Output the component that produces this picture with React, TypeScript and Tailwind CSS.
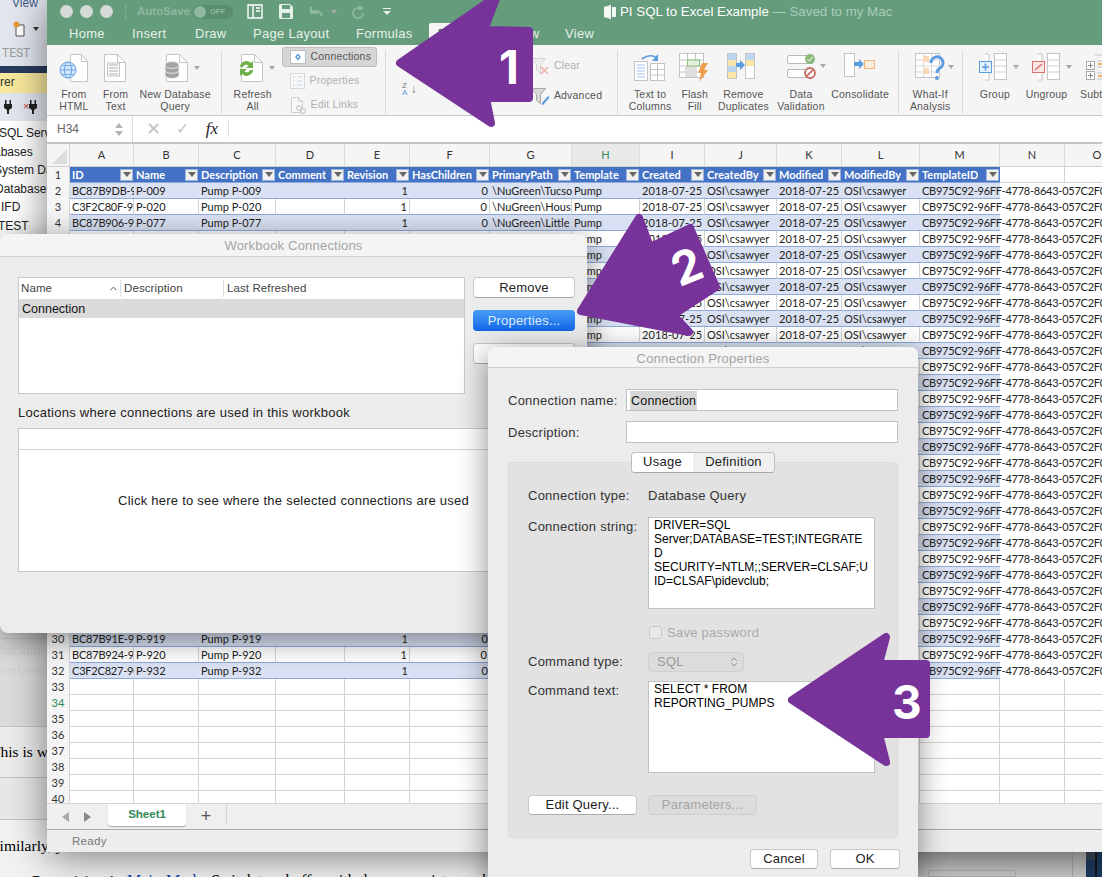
import { ChevronsUpDown, ChevronUp } from "lucide-react";
import type { ReactNode } from "react";

const gridCols =
  "grid grid-cols-[23px_64px_65px_77px_69px_65px_80px_82px_68px_65px_72px_65px_78px_80px_65px_65px]";

const columns = ["A", "B", "C", "D", "E", "F", "G", "H", "I", "J", "K", "L", "M", "N", "O"];
const headers = ["ID", "Name", "Description", "Comment", "Revision", "HasChildren", "PrimaryPath", "Template", "Created", "CreatedBy", "Modified", "ModifiedBy", "TemplateID"];

const pumps: Record<number, [string, string, string]> = {
  2: ["BC87B9DB-90F1-4A11", "P-009", "\\NuGreen\\Tucson"],
  3: ["C3F2C80F-90F1-4A11", "P-020", "\\NuGreen\\Houston"],
  4: ["BC87B906-90F1-4A11", "P-077", "\\NuGreen\\Little Rock"],
  30: ["BC87B91E-90F1-4A11", "P-919", "\\NuGreen\\Tucson"],
  31: ["BC87B924-90F1-4A11", "P-920", "\\NuGreen\\Tucson"],
  32: ["C3F2C827-90F1-4A11", "P-932", "\\NuGreen\\Houston"],
};

const dataRows = Array.from({ length: 31 }, (_, i) => i + 2);
const emptyRows = [33, 34, 35, 36, 37, 38, 39, 40];

const RowNumber = ({ n }: { n: number }) => (
  <div className={`bg-[#f5f5f5] text-center border-r border-[#d4d4d4] ${n === 34 ? "text-[#2f8a57]" : "text-[#333]"}`}>{n}</div>
);

const DataRow = ({ n }: { n: number }) => {
  const [id, name, path] = pumps[n] ?? ["BC87B906-90F1-4A11", "P-1" + n, "\\NuGreen\\Tucson"];
  const shaded = n % 2 === 0;
  const cell = `overflow-hidden whitespace-nowrap px-[2px] border-b border-[#8ea9db] ${shaded ? "bg-[#d9e1f2]" : "bg-white border-r border-r-[#d4d4d4]"}`;
  return (
    <div className={`${gridCols} h-[16px] leading-[15px]`}>
      <RowNumber n={n} />
      <div className={`${cell} tracking-[-0.2px]`}>{id}</div>
      <div className={cell}>{name}</div>
      <div className={cell}>Pump {name}</div>
      <div className={cell} />
      <div className={`${cell} text-right`}>1</div>
      <div className={`${cell} text-right`}>0</div>
      <div className={cell}>{path}</div>
      <div className={cell}>Pump</div>
      <div className={`${cell} tracking-[0.1px] [word-spacing:-1px]`}>2018-07-25 12:40:11</div>
      <div className={cell}>OSI\csawyer</div>
      <div className={`${cell} tracking-[0.1px] [word-spacing:-1px]`}>2018-07-25 12:40:11</div>
      <div className={cell}>OSI\csawyer</div>
      <div className={`whitespace-nowrap px-[2px] tracking-[-0.25px] border-b border-[#8ea9db] relative ${shaded ? "bg-[#d9e1f2]" : "bg-white"}`}>CB975C92-96FF-4778-8643-057C2F0A11B2</div>
      <div />
      <div />
    </div>
  );
};

const EmptyRow = ({ n }: { n: number }) => (
  <div className={`${gridCols} h-[16px] leading-[15px]`}>
    <RowNumber n={n} />
    {columns.map((c) => (
      <div key={c} className="border-r border-b border-[#d4d4d4]" />
    ))}
  </div>
);

const Sheet = () => (
  <div className="flex-1 overflow-hidden bg-white font-[Lato,sans-serif] text-[11px] text-[#222]">
    <div className={`${gridCols} h-[23px] bg-[#f5f5f5] text-[#333] leading-[22px] border-b border-[#d0d0d0]`}>
      <div className="border-r border-[#d4d4d4] flex items-end justify-end pr-[2px] pb-[2px]">
        <svg width="15" height="15" viewBox="0 0 15 15"><path d="M15 0v15H0z" fill="#dcdcdc" /></svg>
      </div>
      {columns.map((c) => (
        <div key={c} className={`text-center border-r border-[#dcdcdc] ${c === "H" ? "bg-[#e9e9e9] text-[#2f8a57]" : ""}`}>{c}</div>
      ))}
    </div>
    <div className={`${gridCols} h-[16px] leading-[15px]`}>
      <RowNumber n={1} />
      {headers.map((h) => (
        <div key={h} className="bg-[#4472c4] border-b border-[#8ea9db] text-white font-bold pl-[2px] pr-[1px] flex items-center justify-between overflow-hidden whitespace-nowrap">
          <span className="overflow-hidden">{h}</span>
          <span className="shrink-0 w-[13px] h-[12px] bg-[#f0f0f0] border border-[#9db3d9] flex items-center justify-center">
            <span className="w-0 h-0 border-x-[4px] border-x-transparent border-t-[5px] border-t-[#666]" />
          </span>
        </div>
      ))}
      <div className="border-r border-b border-[#d4d4d4]" />
      <div className="border-r border-b border-[#d4d4d4]" />
    </div>
    {dataRows.map((n) => (
      <DataRow key={n} n={n} />
    ))}
    {emptyRows.map((n) => (
      <EmptyRow key={n} n={n} />
    ))}
  </div>
);

/* ribbon drawings */
const Doc = ({ children }: { children?: ReactNode }) => (
  <svg width="30" height="30" viewBox="0 0 30 30" fill="none">
    <path d="M3.5 1.5h13l8 8v19h-21z" fill="#fff" stroke="#c4c4c4" />
    <path d="M16.5 1.5v8h8" stroke="#c4c4c4" />
    {children}
  </svg>
);

const GlobeIcon = () => (
  <svg width="30" height="30" viewBox="0 0 30 30" fill="none">
    <path d="M11.5 1.5h11l6 7v20h-17z" fill="#fff" stroke="#c4c4c4" />
    <path d="M22.5 1.5v7h6" stroke="#c4c4c4" />
    <circle cx="9" cy="17" r="8" fill="#d3e6f9" stroke="#6fa9e6" />
    <ellipse cx="9" cy="17" rx="3.6" ry="8" stroke="#6fa9e6" />
    <path d="M1 17h16M2.5 12.5h13M2.5 21.5h13" stroke="#6fa9e6" />
  </svg>
);

const TextDocIcon = () => (
  <Doc>
    <path d="M8 12h9M8 15h9M8 18h9M8 21h9" stroke="#aaa" />
    <rect x="6.5" y="10" width="12" height="13" stroke="#c4c4c4" />
  </Doc>
);

const DatabaseIcon = () => (
  <Doc>
    <g fill="#a2a2a2" stroke="#f4f4f4" strokeWidth="0.8">
      <ellipse cx="9" cy="22" rx="7" ry="3.4" />
      <path d="M2 22v-5h14v5" />
      <ellipse cx="9" cy="17" rx="7" ry="3.4" />
      <path d="M2 17v-5h14v5" />
      <ellipse cx="9" cy="12" rx="7" ry="3.4" />
    </g>
  </Doc>
);

const RefreshIcon = () => (
  <Doc>
    <path d="M2 14a6.5 6.5 0 0 1 11-4l2-2v7H8l2.5-2.5A3.5 3.5 0 0 0 5 14z" fill="#6fb04a" />
    <path d="M15 17a6.5 6.5 0 0 1-11 4l-2 2v-7h7l-2.5 2.5A3.5 3.5 0 0 0 12 17z" fill="#6fb04a" />
  </Doc>
);

const ConnectionsIcon = () => (
  <svg width="16" height="14" viewBox="0 0 16 14" fill="none">
    <rect x="0.5" y="0.5" width="15" height="13" fill="#fff" stroke="#bdbdbd" />
    <path d="M8 3.5 11 7 8 10.5 5 7z" fill="#5b9be0" />
    <circle cx="8" cy="7" r="1" fill="#fff" />
  </svg>
);

const PropertiesIcon = () => (
  <svg width="15" height="16" viewBox="0 0 15 16" fill="none" stroke="#d8d8d8">
    <rect x="0.5" y="0.5" width="14" height="15" fill="#f8f8f8" />
    <path d="M3 4h2M7 4h5M3 8h2M7 8h5M3 12h2M7 12h5" stroke="#c6d8ea" />
  </svg>
);

const LinksIcon = () => (
  <svg width="17" height="17" viewBox="0 0 17 17" fill="none" stroke="#d0d0d0">
    <path d="M1.5.5h7l4 4v11h-11z" fill="#f8f8f8" />
    <path d="M8.5.5v4h4" />
    <circle cx="9" cy="11" r="2.4" fill="#f5f5f5" stroke="#bbb" />
    <circle cx="13" cy="14" r="2.4" fill="#f5f5f5" stroke="#bbb" />
  </svg>
);

const Funnel = ({ mark }: { mark: "clear" | "edit" }) => (
  <svg width="19" height="19" viewBox="0 0 19 19" fill="none">
    <path d="M.5 1.5h14l-5 6v9l-4-3v-6z" fill={mark === "clear" ? "#eeeeee" : "#d9d9d9"} stroke={mark === "clear" ? "#d4d4d4" : "#a8a8a8"} />
    {mark === "clear" ? (
      <path d="M10 10l7 7M17 10l-7 7" stroke="#eeb3ae" strokeWidth="1.6" />
    ) : (
      <path d="M11 16l6-7 1.5 1.5-6 7-2 .5z" fill="#5b9be0" />
    )}
  </svg>
);

const SplitIcon = () => (
  <svg width="34" height="30" viewBox="0 0 34 30" fill="none">
    <path d="M9 6q8-6 15-1" stroke="#5b9be0" strokeWidth="1.6" />
    <path d="M25 1v7h-6z" fill="#5b9be0" />
    <rect x="1.5" y="8.5" width="13" height="19" fill="#fff" stroke="#c4c4c4" />
    <path d="M4 12h8M4 15h8M4 18h8M4 21h8M4 24h8" stroke="#9cc3ec" />
    <rect x="17.5" y="10.5" width="14" height="17" fill="#fff" stroke="#c4c4c4" />
    <path d="M17.5 16.5h14M17.5 22h14M24.5 10.5v17" stroke="#c4c4c4" />
  </svg>
);

const FlashIcon = () => (
  <svg width="32" height="30" viewBox="0 0 32 30" fill="none">
    <rect x="0.5" y="0.5" width="24" height="24" fill="#fff" stroke="#c4c4c4" />
    <path d="M.5 7h24M.5 13h24M.5 19h24M8.5.5v24M16.5.5v24" stroke="#c4c4c4" />
    <rect x="8.5" y="7" width="12" height="6" fill="#e4f1de" stroke="#8cbf7a" />
    <rect x="6" y="14" width="12" height="10" fill="#dedede" />
    <path d="M23 10h6l-4 7h4l-9 12 2-9h-3z" fill="#ef9f4a" />
  </svg>
);

const DuplicatesIcon = () => (
  <svg width="32" height="28" viewBox="0 0 32 28" fill="none">
    <rect x="0.5" y="0.5" width="9" height="25" fill="#fff" stroke="#c4c4c4" />
    <rect x="1" y="1" width="8" height="6" fill="#bcd6f2" />
    <rect x="1" y="13" width="8" height="6" fill="#bcd6f2" />
    <rect x="1" y="19" width="8" height="6" fill="#fbe6a7" />
    <rect x="1" y="7" width="8" height="6" fill="#fbe6a7" />
    <rect x="18.5" y="0.5" width="9" height="25" fill="#fff" stroke="#c4c4c4" />
    <rect x="19" y="1" width="8" height="6" fill="#bcd6f2" />
    <rect x="19" y="7" width="8" height="6" fill="#fbe6a7" />
    <path d="M9 10h4V7l5 5-5 5v-3H9z" fill="#5b9be0" />
  </svg>
);

const ValidationIcon = () => (
  <svg width="30" height="26" viewBox="0 0 30 26" fill="none">
    <rect x="0.5" y="2.5" width="26" height="8" rx="1.5" fill="#fff" stroke="#b8b8b8" />
    <rect x="0.5" y="16.5" width="26" height="8" rx="1.5" fill="#fff" stroke="#b8b8b8" />
    <circle cx="23" cy="6" r="5" fill="#8dbb7c" />
    <path d="M20.5 6l2 2 3-4" stroke="#fff" />
    <circle cx="23" cy="20" r="5" fill="#fff" stroke="#c96a64" strokeWidth="1.8" />
    <path d="M19.6 23.2l6.8-6.5" stroke="#c96a64" strokeWidth="1.8" />
  </svg>
);

const ConsolidateIcon = () => (
  <svg width="32" height="24" viewBox="0 0 32 24" fill="none">
    <rect x="0.5" y="0.5" width="10" height="23" fill="#fff" stroke="#c4c4c4" />
    <path d="M10 9h5V6l5 5-5 5v-3h-5z" fill="#5b9be0" />
    <rect x="20.5" y="7.5" width="10" height="8" fill="#fdeedc" stroke="#efb77c" />
  </svg>
);

const WhatIfIcon = () => (
  <svg width="32" height="28" viewBox="0 0 32 28" fill="none">
    <rect x="0.5" y="0.5" width="24" height="24" fill="#fff" stroke="#c4c4c4" />
    <path d="M.5 7h24M.5 13h24M.5 19h24M8.5.5v24M16.5.5v24" stroke="#d6d6d6" />
    <rect x="8" y="3" width="6" height="6" fill="#f8d7bb" />
    <rect x="8" y="15" width="6" height="6" fill="#f8d7bb" />
    <path d="M16 10a6 6 0 1 1 9 5c-2 1-3 2-3 5" stroke="#5b9be0" strokeWidth="3" />
    <circle cx="22" cy="25" r="2" fill="#5b9be0" />
  </svg>
);

const GroupIcon = ({ kind }: { kind: "group" | "ungroup" }) => (
  <svg width="28" height="28" viewBox="0 0 28 28" fill="none">
    <rect x="15.5" y="0.5" width="12" height="26" fill="#fff" stroke="#c4c4c4" />
    <path d="M15.5 7h12M15.5 13h12M15.5 19h12" stroke="#d0d0d0" />
    <path d="M6 1h4v26H6" stroke="#c4c4c4" fill="#fff" />
    <rect x="0.5" y="8.5" width="12" height="11" fill={kind === "group" ? "#e7f1fb" : "#fce8e6"} stroke={kind === "group" ? "#5b9be0" : "#d8716a"} />
    {kind === "group" ? <path d="M3 14h7M6.5 10.5v7" stroke="#5b9be0" strokeWidth="1.6" /> : <path d="M3 17l7-6" stroke="#d8716a" strokeWidth="1.6" />}
  </svg>
);

const SubtotalIcon = () => (
  <svg width="28" height="28" viewBox="0 0 28 28" fill="none">
    <rect x="0.5" y="8.5" width="8" height="8" fill="#fff" stroke="#aaa" />
    <rect x="0.5" y="18.5" width="8" height="8" fill="#fff" stroke="#aaa" />
    <path d="M2 12.5h5M4.5 10v5M2 22.5h5M4.5 20v5" stroke="#888" />
    <path d="M9 2h19M11 8h17M11 14h17M11 20h17M11 26h17" stroke="#c4c4c4" />
    <path d="M12 11h16M12 23h16" stroke="#f2b366" strokeWidth="2" />
  </svg>
);

const Caret = ({ className = "" }: { className?: string }) => (
  <span className={`inline-block w-0 h-0 border-x-[3px] border-x-transparent border-t-[4px] border-t-[#a8a8a8] ${className}`} />
);

const RibbonItem = ({ w, icon, lines }: { w: string; icon: ReactNode; lines: string[] }) => (
  <div className={`${w} flex flex-col items-center`}>
    <div className="h-[35px] flex items-start justify-center">{icon}</div>
    {lines.map((l) => (
      <div key={l} className="leading-[12px] whitespace-nowrap">{l}</div>
    ))}
  </div>
);

const RibbonSep = ({ className }: { className: string }) => <div className={`w-px h-[64px] -mt-[3px] bg-[#dcdcdc] shrink-0 ${className}`} />;

const Ribbon = () => (
  <div className="h-[71px] bg-[#f5f5f5] border-b border-[#c8c8c8] pt-[8px] flex items-start text-[10.5px] tracking-[0.2px] text-[#555]">
    <RibbonItem w="w-[42px] ml-[6px]" icon={<GlobeIcon />} lines={["From", "HTML"]} />
    <RibbonItem w="w-[42px]" icon={<TextDocIcon />} lines={["From", "Text"]} />
    <RibbonItem
      w="w-[78px]"
      icon={
        <div className="flex items-center gap-[1px] pl-[12px]">
          <DatabaseIcon />
          <Caret />
        </div>
      }
      lines={["New Database", "Query"]}
    />
    <RibbonSep className="ml-[7px]" />
    <RibbonItem
      w="w-[50px] ml-[6px]"
      icon={
        <div className="flex items-center gap-[1px] pl-[8px]">
          <RefreshIcon />
          <Caret />
        </div>
      }
      lines={["Refresh", "All"]}
    />
    <div className="w-[96px] ml-[4px] -mt-[6px] flex flex-col text-[#b0b0b0]">
      <div className="h-[20px] flex items-center gap-[5px] pl-[7px] bg-[#d6d6d6] border border-[#bdbdbd] rounded-[3px] text-[#555]">
        <ConnectionsIcon />
        <span>Connections</span>
      </div>
      <div className="h-[24px] mt-[2px] flex items-center gap-[5px] pl-[8px]">
        <PropertiesIcon />
        <span>Properties</span>
      </div>
      <div className="h-[24px] flex items-center gap-[4px] pl-[8px]">
        <LinksIcon />
        <span>Edit Links</span>
      </div>
    </div>
    <RibbonSep className="ml-[8px]" />
    <div className="w-[233px] flex">
      <div className="w-[145px] pl-[16px] pt-[30px] flex items-center gap-[3px] text-[#999] h-[42px]">
        <div className="flex flex-col text-[8px] leading-[7px] items-center">
          <span className="text-[#777]">Z</span>
          <span className="text-[#5b9be0]">A</span>
        </div>
        <span className="text-[12px] font-bold text-[#777]">↓</span>
      </div>
      <div className="flex flex-col -mt-[2px]">
        <div className="h-[30px] flex items-center gap-[4px] text-[#b0b0b0]">
          <Funnel mark="clear" />
          <span>Clear</span>
        </div>
        <div className="h-[30px] flex items-center gap-[4px]">
          <Funnel mark="edit" />
          <span>Advanced</span>
        </div>
      </div>
    </div>
    <RibbonSep className="" />
    <RibbonItem w="w-[50px] ml-[7px]" icon={<SplitIcon />} lines={["Text to", "Columns"]} />
    <RibbonItem w="w-[40px]" icon={<FlashIcon />} lines={["Flash", "Fill"]} />
    <RibbonItem w="w-[58px]" icon={<DuplicatesIcon />} lines={["Remove", "Duplicates"]} />
    <RibbonItem
      w="w-[58px]"
      icon={
        <div className="flex items-center gap-[3px] pl-[10px]">
          <ValidationIcon />
          <Caret />
        </div>
      }
      lines={["Data", "Validation"]}
    />
    <RibbonItem w="w-[61px]" icon={<ConsolidateIcon />} lines={["Consolidate"]} />
    <RibbonSep className="ml-[8px]" />
    <RibbonItem
      w="w-[50px] ml-[6px]"
      icon={
        <div className="flex items-center gap-[1px] pl-[8px]">
          <WhatIfIcon />
          <Caret />
        </div>
      }
      lines={["What-If", "Analysis"]}
    />
    <RibbonSep className="ml-[7px]" />
    <RibbonItem
      w="w-[50px] ml-[7px]"
      icon={
        <div className="flex items-center gap-[6px] pl-[8px]">
          <GroupIcon kind="group" />
          <Caret />
        </div>
      }
      lines={["Group"]}
    />
    <RibbonItem
      w="w-[54px]"
      icon={
        <div className="flex items-center gap-[6px] pl-[10px]">
          <GroupIcon kind="ungroup" />
          <Caret />
        </div>
      }
      lines={["Ungroup"]}
    />
    <RibbonItem w="w-[54px]" icon={<SubtotalIcon />} lines={["Subtotal"]} />
  </div>
);

const TitleBar = () => (
  <div className="h-[45px] bg-[#649c7c] text-white shrink-0">
    <div className="h-[23px] flex items-center pl-[13px]">
      <div className="flex gap-[7px]">
        <span className="w-[13px] h-[13px] rounded-full bg-[#d4dbd6]" />
        <span className="w-[13px] h-[13px] rounded-full bg-[#d4dbd6]" />
        <span className="w-[13px] h-[13px] rounded-full bg-[#d4dbd6]" />
      </div>
      <div className="w-px h-[16px] bg-[#7cae91] ml-[12px]" />
      <span className="ml-[11px] w-[56px] text-[11.5px] font-bold text-[#8dba9f]">AutoSave</span>
      <div className="w-[40px] h-[14px] rounded-full bg-[#588d6e] flex items-center text-[7.5px] font-bold text-[#8dba9f]">
        <span className="w-[12px] h-[12px] rounded-full bg-[#8fb6a0] ml-[1px] mr-[4px]" />
        OFF
      </div>
      <svg className="ml-[14px]" width="16" height="15" viewBox="0 0 16 15" fill="none" stroke="#fff" strokeWidth="1.4">
        <path d="M1 1h14v13H1zM6 1v13M9 4h4M9 7h4" />
      </svg>
      <svg className="ml-[16px]" width="14" height="15" viewBox="0 0 14 15" fill="#e6efe9">
        <path d="M0 1.5A1.5 1.5 0 0 1 1.5 0H11l3 3v10.5a1.5 1.5 0 0 1-1.5 1.5h-11A1.5 1.5 0 0 1 0 13.5zM3 1v4h8V1zM3 9v5h8V9z" fillRule="evenodd" />
      </svg>
      <svg className="ml-[16px]" width="16" height="12" viewBox="0 0 16 12" fill="none" stroke="#8dba9f" strokeWidth="2">
        <path d="M2 1v6h6M2 7a6.5 6.5 0 0 1 11 3" />
      </svg>
      <Caret className="ml-[6px] border-t-[#8dba9f]" />
      <svg className="ml-[14px]" width="14" height="14" viewBox="0 0 14 14" fill="none" stroke="#8dba9f" strokeWidth="2">
        <path d="M8 1l3 2-3 2M11 3H7a5 5 0 1 0 5 5" />
      </svg>
      <div className="ml-[18px] flex flex-col items-center gap-[2px]">
        <span className="w-[8px] h-[1.5px] bg-[#e6efe9]" />
        <span className="w-0 h-0 border-x-[4px] border-x-transparent border-t-[4px] border-t-[#e6efe9]" />
      </div>
      <svg className="ml-[213px]" width="12" height="14" viewBox="0 0 12 14" fill="#f4f8f5">
        <path d="M0 2l7-2v14l-7-2zM8 2h4v10H8z" />
      </svg>
      <span className="ml-[4px] text-[13.3px] whitespace-nowrap">
        PI SQL to Excel Example <span className="text-[#a9cdb8]">— Saved to my Mac</span>
      </span>
    </div>
    <div className="h-[22px] flex items-stretch text-[13px] tracking-[0.3px] text-[#e7f1ea]">
      <span className="ml-[22px] w-[63px] pt-[1px]">Home</span>
      <span className="w-[63px] pt-[1px]">Insert</span>
      <span className="w-[58px] pt-[1px]">Draw</span>
      <span className="w-[103px] pt-[1px]">Page Layout</span>
      <span className="w-[73px] pt-[1px]">Formulas</span>
      <span className="w-[46px] bg-[#f5f5f5] rounded-t-[2px] text-[#217346] text-center pt-[1px]">Data</span>
      <span className="ml-[20px] w-[70px] pt-[1px]">Review</span>
      <span className="pt-[1px]">View</span>
    </div>
  </div>
);

const FormulaBar = () => (
  <div className="h-[28px] bg-white border-b-[2px] border-[#c4c4c4] flex items-center text-[#666] text-[12px]">
    <span className="w-[68px] pl-[10px]">H34</span>
    <div className="flex flex-col gap-[3px] w-[17px]">
      <span className="w-0 h-0 border-x-[4px] border-x-transparent border-b-[5px] border-b-[#b4b4b4]" />
      <span className="w-0 h-0 border-x-[4px] border-x-transparent border-t-[5px] border-t-[#b4b4b4]" />
    </div>
    <div className="w-px h-full bg-[#dcdcdc]" />
    <span className="w-[40px] text-center text-[18px] leading-none font-light text-[#c4c4c4]">✕</span>
    <span className="w-[18px] text-center text-[16px] leading-none text-[#c4c4c4]">✓</span>
    <span className="w-[37px] pl-[5px] text-center text-[17px] italic font-[Liberation_Serif,serif] text-[#222]">fx</span>
    <div className="w-px h-[16px] bg-[#dcdcdc]" />
  </div>
);

const TabsAndStatus = () => (
  <>
    <div className="h-[26px] bg-[#efefef] flex items-start border-t border-[#d4d4d4] shrink-0">
      <div className="w-[61px] h-[25px] pl-[15px] flex items-center gap-[15px]">
        <span className="w-0 h-0 border-y-[5px] border-y-transparent border-r-[7px] border-r-[#a8a8a8]" />
        <span className="w-0 h-0 border-y-[5px] border-y-transparent border-l-[7px] border-l-[#888]" />
      </div>
      <div className="w-[78px] h-[22px] bg-white rounded-b-[3px] shadow-[0_1px_1px_rgba(0,0,0,0.3)] text-center text-[11.5px] font-bold text-[#2f8a57] leading-[20px]">Sheet1</div>
      <span className="w-[40px] text-center text-[18px] leading-[24px] text-[#555]">+</span>
      <div className="w-px h-[20px] bg-[#d4d4d4]" />
    </div>
    <div className="h-[23px] bg-[#ededed] border-t border-[#a8a8a8] pl-[25px] text-[11.5px] leading-[22px] text-[#777] tracking-[0.3px] shrink-0">Ready</div>
  </>
);

const Button = ({ label, className = "" }: { label?: string; className?: string }) => (
  <div className={`flex items-center justify-center bg-white border border-[#c8c8c8] border-b-[#aaa] rounded-[4px] text-[13px] tracking-[0.2px] text-[#222] ${className}`}>{label}</div>
);

const TextBox = ({ lines, className }: { lines: string[]; className: string }) => (
  <div className={`bg-white border border-[#c2c2c2] pl-[5px] text-[12px] tracking-normal leading-[14px] text-black whitespace-nowrap ${className}`}>
    {lines.map((l) => (
      <div key={l}>{l}</div>
    ))}
  </div>
);

const WorkbookConnections = () => (
  <div className="absolute left-0 top-[234px] w-[587px] h-[399px] bg-[#ececec] rounded-lg shadow-[0_6px_30px_rgba(0,0,0,0.45)] overflow-hidden">
    <div className="h-[23px] bg-[#f4f4f4] border-b border-[#d0d0d0] text-center text-[13px] leading-[24px] tracking-[0.2px] text-[#a4a4a4]">Workbook Connections</div>
    <div className="flex pl-[18px] mt-[20px] gap-[8px]">
      <div className="w-[447px] h-[117px] bg-white border border-[#c8c8c8]">
        <div className="h-[21px] flex items-center text-[11.5px] tracking-[0.1px] text-[#444]">
          <span className="w-[102px] pl-[2px] flex items-center justify-between pr-[1px] border-r border-[#dcdcdc]">
            Name <ChevronUp size={11} strokeWidth={2} />
          </span>
          <span className="w-[103px] pl-[3px] border-r border-[#dcdcdc]">Description</span>
          <span className="pl-[3px]">Last Refreshed</span>
        </div>
        <div className="h-[19px] bg-[#dadada] pl-[3px] text-[12.5px] leading-[20px] text-[#111]">Connection</div>
      </div>
      <div className="w-[102px] flex flex-col gap-[12px]">
        <Button label="Remove" className="h-[21px]" />
        <div className="h-[21px] rounded-[4px] bg-gradient-to-b from-[#4a9ef8] to-[#0f66e8] text-[#dfeafc] text-[13px] tracking-[0.2px] flex items-center justify-center">Properties...</div>
        <Button className="h-[21px]" />
      </div>
    </div>
    <div className="pl-[18px] mt-[10px] text-[13px] tracking-[0.25px] leading-[18px] text-[#222]">Locations where connections are used in this workbook</div>
    <div className="ml-[18px] mt-[6px] w-[551px] h-[144px] bg-white border border-[#c8c8c8]">
      <div className="h-[21px] border-b border-[#d4d4d4]" />
      <div className="h-[102px] flex items-center justify-center text-[13px] tracking-[0.25px] text-[#222]">Click here to see where the selected connections are used</div>
    </div>
  </div>
);

const FormLabel = ({ children, className = "" }: { children: ReactNode; className?: string }) => (
  <span className={`shrink-0 text-[#333] ${className}`}>{children}</span>
);

const ConnectionProperties = () => (
  <div className="absolute left-[488px] top-[347px] w-[430px] h-[540px] bg-[#ececec] rounded-lg shadow-[0_6px_30px_rgba(0,0,0,0.45)] text-[13px] tracking-[0.25px]">
    <div className="h-[21px] rounded-t-lg bg-[#f4f4f4] border-b border-[#d0d0d0] text-center text-[13px] leading-[23px] tracking-[0.2px] text-[#a4a4a4]">Connection Properties</div>
    <div className="px-[20px] pt-[21px]">
      <div className="flex items-center h-[22px]">
        <FormLabel className="w-[118px] pt-[1px]">Connection name:</FormLabel>
        <div className="w-[272px] h-full bg-white border border-[#c2c2c2] pl-[3px] flex items-center">
          <span className="bg-[#d8d8d8] px-[1px] text-[#111] leading-[18px] text-[12.5px] tracking-[0.2px] pt-[1px]">Connection</span>
        </div>
      </div>
      <div className="flex items-center h-[22px] mt-[10px]">
        <FormLabel className="w-[118px] pt-[1px]">Description:</FormLabel>
        <div className="w-[272px] h-full bg-white border border-[#c2c2c2]" />
      </div>
      <div className="mt-[19px] w-[390px] h-[376px] bg-[#e2e2e2] border border-[#dbdbdb] rounded-[4px] px-[19px]">
        <div className="flex justify-center -mt-[11px]">
          <div className="w-[144px] h-[21px] flex rounded-[4px] border border-[#bdbdbd] border-b-[#aaa] overflow-hidden leading-[18px]">
            <span className="w-[61px] bg-white text-center text-[#222]">Usage</span>
            <span className="flex-1 bg-[#f0f0f0] text-center text-[#222]">Definition</span>
          </div>
        </div>
        <div className="flex items-center h-[18px] mt-[14px]">
          <FormLabel className="w-[120px]">Connection type:</FormLabel>
          <FormLabel>Database Query</FormLabel>
        </div>
        <div className="flex mt-[12px]">
          <FormLabel className="w-[120px]">Connection string:</FormLabel>
          <TextBox className="w-[227px] h-[92px]" lines={["DRIVER=SQL", "Server;DATABASE=TEST;INTEGRATE", "D", "SECURITY=NTLM;;SERVER=CLSAF;U", "ID=CLSAF\\pidevclub;"]} />
        </div>
        <div className="flex items-center h-[15px] mt-[16px] pl-[121px] gap-[5px] text-[#aaaaaa]">
          <span className="w-[13px] h-[13px] rounded-[3px] border border-[#c8c8c8] bg-[#e8e8e8]" />
          Save password
        </div>
        <div className="flex items-center h-[20px] mt-[12px]">
          <FormLabel className="w-[120px]">Command type:</FormLabel>
          <div className="w-[96px] h-full rounded-[4px] bg-[#dcdcdc] border border-[#cfcfcf] flex items-center justify-between pl-[8px] pr-[3px] text-[#9a9a9a]">
            SQL <ChevronsUpDown size={12} strokeWidth={1.5} className="text-[#777]" />
          </div>
        </div>
        <div className="flex mt-[9px]">
          <FormLabel className="w-[120px]">Command text:</FormLabel>
          <TextBox className="w-[227px] h-[92px]" lines={["SELECT * FROM", "REPORTING_PUMPS"]} />
        </div>
        <div className="flex mt-[22px] gap-[11px]">
          <Button label="Edit Query..." className="w-[109px] h-[20px]" />
          <div className="w-[109px] h-[20px] rounded-[4px] bg-[#dcdcdc] border border-[#cfcfcf] text-[#a4a4a4] flex items-center justify-center">Parameters...</div>
        </div>
      </div>
      <div className="flex justify-end gap-[12px] mt-[11px] -mr-[2px]">
        <Button label="Cancel" className="w-[68px] h-[20px]" />
        <Button label="OK" className="w-[70px] h-[20px]" />
      </div>
    </div>
  </div>
);

const PlugIcon = () => (
  <svg width="8" height="14" viewBox="0 0 8 14" fill="#222">
    <path d="M1 0h1.500v4H5.500V0H7v4h1v4L5 10v4H3v-4L0 8V4h1z" />
  </svg>
);

const ObjectExplorer = () => (
  <div className="absolute left-0 top-0 w-[60px] h-[240px] bg-[#e4e7f0] text-[12px] text-[#222] overflow-hidden">
    <div className="h-[14px] pl-[12px] text-[#3c5a86] leading-[6px]">View</div>
    <div className="h-[31px] flex items-center pl-[13px] gap-[6px] border-b border-[#e0e2ea]">
      <svg width="14" height="16" viewBox="0 0 14 16" fill="none">
        <path d="M3 4h8v11H3z" fill="#fff" stroke="#555" />
        <circle cx="3.5" cy="3.5" r="3" fill="#e79a34" />
      </svg>
      <span className="w-0 h-0 border-x-[3px] border-x-transparent border-t-[4px] border-t-[#333]" />
    </div>
    <div className="h-[21px] pl-[2px] text-[#9a9a9a] leading-[17px] font-[Roboto,sans-serif]">TEST</div>
    <div className="h-[7px] bg-[#293a5c]" />
    <div className="h-[20px] bg-[#f9e99c] text-[#333] leading-[19px]">rer</div>
    <div className="h-[28px] flex items-center pl-[4px] bg-[#e4e7f0]">
      <PlugIcon />
      <span className="ml-[11px] text-[11px] leading-[8px] self-start mt-[9px] text-[#c0392b]">×</span>
      <PlugIcon />
    </div>
    <div className="bg-white h-[120px] leading-[18.5px] whitespace-nowrap pt-[3px]">
      <div className="-ml-[1px]">SQL Server</div>
      <div className="-ml-[6px]">abases</div>
      <div className="-ml-[6px]">System Data</div>
      <div className="-ml-[5px]">Database</div>
      <div className="ml-[1px]">IFD</div>
      <div className="-ml-[2px]">TEST</div>
    </div>
  </div>
);

const WebPage = () => (
  <div className="absolute left-0 top-[600px] w-[1086px] h-[277px] font-[Liberation_Serif,serif] text-[15.5px] text-black overflow-hidden">
    <div className="h-[39px] bg-[#dcdcdc] border-b border-[#cccccc]" />
    <div className="h-[88px] bg-[#dcdcdc] border-b border-[#c4c4c4] pt-[2px] text-[#d0d0d0] text-[14px] leading-[20px]">
      <div>backup</div>
      <div>endpoint</div>
    </div>
    <div className="h-[51px] bg-[#ececec] border-b border-[#c4c4c4] -indent-[9px] pt-[13px] leading-[24px]">This is what</div>
    <div className="h-[42px] bg-[#e8e8e8] border-b border-[#c4c4c4]" />
    <div className="h-[35px] bg-[#f2f2f2] pt-[14px] leading-[24px] -indent-[9px]">Similarly, you can</div>
    <div className="h-[40px] bg-[#f2f2f2] pt-[14px] pl-[32px] text-[14px] leading-[24px] whitespace-nowrap">
      Determining the <span className="text-[16px] text-[#0645ad]">MajorMode</span>
      <span className="text-[15.7px]">. Switch to a buffer with the appropriate mode</span>
    </div>
  </div>
);

const DeskBottom = () => (
  <>
    <div className="absolute left-[918px] top-[852px] w-[168px] h-[25px] bg-gradient-to-b from-[#b4b4b4] to-[#cccccc] flex">
      <div className="ml-[10px] mt-[18px] w-[88px] h-[7px] border border-[#b0b0b0]" />
      <div className="ml-[56px] w-px bg-[#a8a8a8]" />
    </div>
    <div className="absolute left-[1086px] top-[852px] w-[16px] h-[25px] bg-[#1d3a60] flex">
      <div className="w-[9px] h-[8px] bg-[#39465a]" />
      <div className="w-[2px] h-full bg-[#14181f]" />
    </div>
  </>
);

const Arrows = () => (
  <svg className="absolute inset-0 pointer-events-none" width="1102" height="877" viewBox="0 0 1102 877">
    <g fill="#773399" stroke="#773399" strokeWidth="8" strokeLinejoin="round">
      <polygon points="400,63 497,-4 484,30 529,31 529,98 486,98 491,123" />
      <polygon points="581,311 639,218 650,247 690,228 716,287 673,315 689,332" />
      <polygon points="792,700 886,637 879,664 926,664 926,734 879,734 886,762" />
    </g>
  </svg>
);

const ArrowNumber = ({ children, className }: { children: ReactNode; className: string }) => (
  <span className={`absolute text-white font-bold text-[46px] leading-none font-[Inter,sans-serif] ${className}`}>{children}</span>
);

export default function App() {
  return (
    <div className="relative w-[1102px] h-[877px] overflow-hidden bg-[#f4f4f4] font-['Liberation_Sans',sans-serif]">
      <ObjectExplorer />
      <WebPage />
      <DeskBottom />
      <div className="absolute left-[47px] top-0 w-[1080px] h-[852px] flex flex-col bg-white shadow-[0_4px_36px_rgba(0,0,0,0.5)]">
        <TitleBar />
        <Ribbon />
        <FormulaBar />
        <Sheet />
        <TabsAndStatus />
      </div>
      <WorkbookConnections />
      <ConnectionProperties />
      <Arrows />
      <ArrowNumber className="left-[499px] top-[44px]">1</ArrowNumber>
      <ArrowNumber className="left-[672px] top-[243px] -rotate-[22deg]">2</ArrowNumber>
      <ArrowNumber className="left-[892px] top-[679px]">3</ArrowNumber>
    </div>
  );
}
